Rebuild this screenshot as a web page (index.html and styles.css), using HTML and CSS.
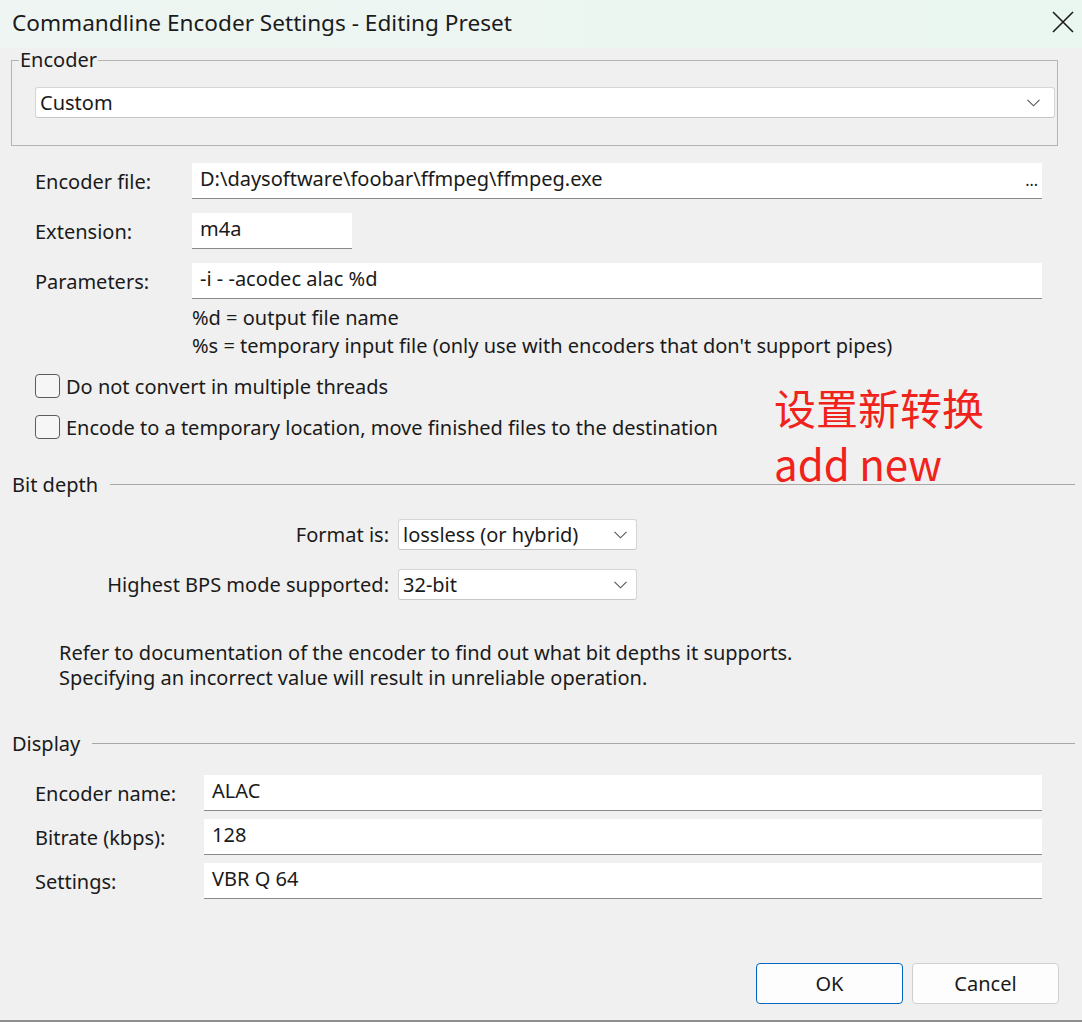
FILE: index.html
```html
<!DOCTYPE html>
<html lang="en">
<head>
    <meta charset="utf-8" />
    <title>Commandline Encoder Settings - Editing Preset</title>
    <link rel="stylesheet" href="styles.css">
</head>
<body>
    <div class="dialog">
        <div class="titlebar">
            <span class="title">Commandline Encoder Settings - Editing Preset</span>
            <svg class="close" width="22" height="22" viewBox="0 0 22 22">
                <path d="M1 1 L21 21 M21 1 L1 21" stroke="#1b1b1b" stroke-width="1.6" fill="none" />
            </svg>
        </div>

        <fieldset class="group">
            <legend>Encoder</legend>
            <div class="combo wide">
                <span>Custom</span>
                <svg class="chevron" width="13" height="8" viewBox="0 0 13 8"><path d="M0.5 0.8 L6.5 6.8 L12.5 0.8" stroke="#555" stroke-width="1.1" fill="none" /></svg>
            </div>
        </fieldset>

        <div class="form-row first">
            <label>Encoder file:</label>
            <div class="field long">D:\daysoftware\foobar\ffmpeg\ffmpeg.exe<span class="browse">...</span></div>
        </div>
        <div class="form-row">
            <label>Extension:</label>
            <div class="field short">m4a</div>
        </div>
        <div class="form-row">
            <label>Parameters:</label>
            <div class="field long">-i - -acodec alac %d</div>
        </div>
        <div class="help">
            %d = output file name<br>
            %s = temporary input file (only use with encoders that don't support pipes)
        </div>

        <div class="check-row first">
            <span class="checkbox"></span>
            <span>Do not convert in multiple threads</span>
        </div>
        <div class="check-row">
            <span class="checkbox"></span>
            <span>Encode to a temporary location, move finished files to the destination</span>
        </div>

        <div class="section">
            <span>Bit depth</span>
            <div class="rule"></div>
        </div>
        <div class="combo-row first">
            <label>Format is:</label>
            <div class="combo small">
                <span>lossless (or hybrid)</span>
                <svg class="chevron" width="13" height="8" viewBox="0 0 13 8"><path d="M0.5 0.8 L6.5 6.8 L12.5 0.8" stroke="#555" stroke-width="1.1" fill="none" /></svg>
            </div>
        </div>
        <div class="combo-row">
            <label>Highest BPS mode supported:</label>
            <div class="combo small">
                <span>32-bit</span>
                <svg class="chevron" width="13" height="8" viewBox="0 0 13 8"><path d="M0.5 0.8 L6.5 6.8 L12.5 0.8" stroke="#555" stroke-width="1.1" fill="none" /></svg>
            </div>
        </div>
        <div class="note">
            Refer to documentation of the encoder to find out what bit depths it supports.<br>
            Specifying an incorrect value will result in unreliable operation.
        </div>

        <div class="section display">
            <span>Display</span>
            <div class="rule"></div>
        </div>
        <div class="form-row disp first">
            <label>Encoder name:</label>
            <div class="field">ALAC</div>
        </div>
        <div class="form-row disp">
            <label>Bitrate (kbps):</label>
            <div class="field">128</div>
        </div>
        <div class="form-row disp">
            <label>Settings:</label>
            <div class="field">VBR Q 64</div>
        </div>

        <div class="buttons">
            <button class="btn default">OK</button>
            <button class="btn">Cancel</button>
        </div>

        <div class="annotation">设置新转换<br>add new</div>
    </div>
</body>
</html>
```

FILE: styles.css
```css
body {
    margin: 0;
    background: #f0f0f0;
    font-family: 'Noto Sans', 'Open Sans', sans-serif;
    font-size: 20px;
    color: #1a1a1a;
}

.dialog {
    position: relative;
    width: 1082px;
    height: 1022px;
    box-sizing: border-box;
    border-bottom: 2px solid #8f8f8f;
    overflow: hidden;
}

.titlebar {
    height: 48px;
    display: flex;
    align-items: center;
    justify-content: space-between;
    padding: 0 8px 0 12px;
    background: linear-gradient(90deg, #eef5f2 0%, #ecf6f1 60%, #eaf6f0 100%);
}

.title {
    font-size: 22.6px;
    color: #1b1b1b;
    margin-top: -4px;
}

.close {
    margin-top: -4px;
}

.group {
    margin: 0 24px 0 11px;
    padding: 15px 2px 27px 23px;
    border: 1px solid #b4b4b4;
    min-width: 0;
}

.group legend {
    padding: 0 1px;
    margin-left: -16px;
    line-height: 24px;
}

.combo {
    display: flex;
    align-items: center;
    justify-content: space-between;
    height: 31px;
    box-sizing: border-box;
    padding: 0 14px 0 4px;
    background: #fff;
    border: 1px solid #d6d6d6;
    border-bottom-color: #c6c6c6;
    border-radius: 3px;
}

.combo.wide {
    width: 1020px;
}

.combo.small {
    width: 239px;
    padding-right: 9px;
}

.chevron {
    flex-shrink: 0;
}

.form-row {
    display: flex;
    align-items: center;
    height: 36px;
    padding-left: 35px;
    margin-top: 14px;
}

.form-row.first {
    margin-top: 17px;
}

.form-row label {
    width: 157px;
    flex-shrink: 0;
}

.field {
    position: relative;
    height: 36px;
    box-sizing: border-box;
    padding: 0 8px;
    line-height: 32px;
    background: #fff;
    border-bottom: 1px solid #8a8a8a;
    width: 850px;
}

.field.short {
    width: 160px;
}

.browse {
    position: absolute;
    right: 4px;
    top: 1px;
    font-size: 16px;
}

.help {
    margin-top: 5px;
    padding-left: 192px;
    line-height: 28px;
}

.check-row {
    display: flex;
    align-items: center;
    height: 36px;
    padding-left: 35px;
    margin-top: 5px;
}

.check-row.first {
    margin-top: 8px;
}

.checkbox {
    width: 25px;
    height: 24px;
    box-sizing: border-box;
    border: 1px solid #5c5c5c;
    border-radius: 4px;
    background: #f6f6f6;
    margin-right: 6px;
}

.section {
    display: flex;
    align-items: center;
    height: 28px;
    margin-top: 25px;
    padding: 0 7px 0 12px;
}

.section .rule {
    flex: 1;
    height: 1px;
    background: #a8a8a8;
    margin-left: 12px;
}

.section.display {
    margin-top: 39px;
}

.combo-row {
    display: flex;
    align-items: center;
    margin-top: 19px;
}

.combo-row.first {
    margin-top: 21px;
}

.combo-row label {
    width: 389px;
    text-align: right;
    margin-right: 9px;
    flex-shrink: 0;
}

.note {
    margin-top: 40px;
    padding-left: 59px;
    line-height: 25px;
}

.form-row.disp {
    margin-top: 8px;
}

.form-row.disp.first {
    margin-top: 18px;
}

.form-row.disp label {
    width: 169px;
}

.form-row.disp .field {
    width: 838px;
}

.buttons {
    display: flex;
    justify-content: flex-end;
    gap: 9px;
    margin-top: 64px;
    padding-right: 23px;
}

.btn {
    width: 147px;
    height: 41px;
    font-family: inherit;
    font-size: 20px;
    color: #1a1a1a;
    background: #fdfdfd;
    border: 1px solid #d0d0d0;
    border-radius: 4px;
}

.btn.default {
    border-color: #0067c0;
}

.annotation {
    position: absolute;
    left: 774px;
    top: 379px;
    font-family: 'Noto Sans CJK SC', 'Noto Sans', sans-serif;
    font-size: 42px;
    line-height: 56px;
    color: #f0231c;
}
```
